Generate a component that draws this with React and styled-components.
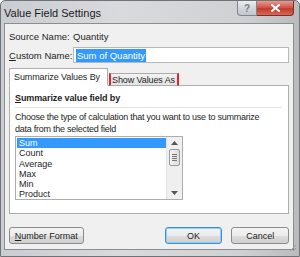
import React from 'react';
import styled, {createGlobalStyle} from 'styled-components';

const Global = createGlobalStyle`
    html, body { margin: 0; padding: 0; background: #ffffff; }
    body { font-family: "Liberation Sans", Arial, sans-serif; }
`

const Window = styled.div`
    width: 300px;
    height: 257px;
    box-sizing: border-box;
    display: flex;
    flex-direction: column;
    background: linear-gradient(90deg, #c9cdd1 0%, #d9dadc 40%, #cfd1d3 80%, #b9bbbd 100%);
    border: 1px solid #6f7378;
    border-radius: 5px 5px 0 0;
    overflow: hidden;
`

const TitleBar = styled.div`
    height: 22px;
    display: flex;
    align-items: flex-start;
    padding-left: 3px;
    flex-shrink: 0;
`

const Title = styled.div`
    font-size: 11px;
    color: #1b1b1b;
    margin-top: 6px;
    flex: 1;
`

const Controls = styled.div`
    display: flex;
    margin-right: 5px;
`

const CapButton = styled.div`
    height: 15px;
    width: ${p => p.$w}px;
    box-sizing: border-box;
    display: flex;
    align-items: center;
    justify-content: center;
    font-size: 10px;
    font-weight: bold;
    color: ${p => p.$close ? '#ffffff' : '#7a7f86'};
    background: ${p => p.$close
        ? 'linear-gradient(180deg, #e59b90 0%, #d2584b 45%, #c23a2b 55%, #d46a58 100%)'
        : 'linear-gradient(180deg, #eceef0 0%, #d3d6da 50%, #c3c7cc 100%)'};
    border: 1px solid ${p => p.$close ? '#7b2d26' : '#80858c'};
    border-top: none;
    border-radius: ${p => p.$close ? '0 0 4px 0' : '0 0 0 4px'};
    border-left-width: ${p => p.$close ? '0' : '1px'};
`

const Body = styled.div`
    flex: 1;
    margin: 0 5px 6px 3px;
    background: #f0f0f0;
    border: 1px solid #8a8d91;
    display: flex;
    flex-direction: column;
    padding: 0 4px 0 4px;
    font-size: 9px;
    letter-spacing: -0.1px;
    color: #1e1e1e;
    position: relative;
    white-space: nowrap;
`

const FieldRow = styled.div`
    display: flex;
    align-items: center;
    height: ${p => p.$h}px;
    margin-top: ${p => p.$mt || 0}px;
    font-size: 9.5px;
    letter-spacing: 0;
`

const Label = styled.div`
    width: 64px;
    u { text-decoration: underline; }
`

const TextInput = styled.div`
    flex: 1;
    height: 16px;
    box-sizing: border-box;
    background: #ffffff;
    border: 1px solid #b8b8b8;
    display: flex;
    align-items: center;
    padding-left: 2px;
    span {
        background: #3399ff;
        color: #ffffff;
        padding: 1px 1px;
    }
`

const Tabs = styled.div`
    display: flex;
    align-items: flex-end;
    margin-top: 5px;
    height: 18px;
    position: relative;
    z-index: 1;
`

const Tab = styled.div`
    height: ${p => p.$active ? 18 : 13}px;
    box-sizing: border-box;
    padding: 0 ${p => p.$marked ? 1 : 4}px;
    display: flex;
    align-items: center;
    background: ${p => p.$active ? '#ffffff' : 'linear-gradient(180deg, #f2f2f2, #e3e3e3)'};
    border: 1px solid #adadad;
    border-bottom: ${p => p.$active ? '1px solid #ffffff' : '1px solid #adadad'};
    ${p => p.$marked && 'border-left: 2px solid #e8202a; border-right: 2px solid #e8202a; margin-left: 1px;'}
    width: ${p => p.$w}px;
`

const Panel = styled.div`
    height: 129px;
    box-sizing: border-box;
    background: #ffffff;
    border: 1px solid #adadad;
    margin-top: -1px;
    padding: 7px 5px 0 5px;
    display: flex;
    flex-direction: column;
`

const Heading = styled.div`
    font-weight: bold;
    padding-bottom: 4px;
    border-bottom: 1px solid #e3e3e3;
    margin-right: 1px;
    u { text-decoration: underline; }
`

const Desc = styled.div`
    margin-top: 3px;
    line-height: 12px;
    letter-spacing: -0.25px;
`

const ListBox = styled.div`
    width: 168px;
    height: 64px;
    box-sizing: border-box;
    border: 1px solid #adadad;
    margin-top: 1px;
    display: flex;
    overflow: hidden;
    letter-spacing: 0;
`

const Items = styled.div`
    flex: 1;
    padding: 1px 0 0 1px;
`

const Item = styled.div`
    height: 10.3px;
    line-height: 10px;
    padding-left: 2px;
    background: ${p => p.$sel ? '#3399ff' : 'transparent'};
    color: ${p => p.$sel ? '#ffffff' : '#1e1e1e'};
`

const Scroll = styled.div`
    width: 15px;
    background: #efefef;
    border-left: 1px solid #e2e2e2;
    display: flex;
    flex-direction: column;
    align-items: center;
`

const Arrow = styled.div`
    height: 12px;
    display: flex;
    align-items: center;
    justify-content: center;
`

const Thumb = styled.div`
    width: 11px;
    height: 17px;
    box-sizing: border-box;
    border: 1px solid #9a9a9a;
    border-radius: 2px;
    background: linear-gradient(90deg, #f4f4f4, #dcdcdc);
    display: flex;
    flex-direction: column;
    align-items: center;
    justify-content: center;
    gap: 1px;
    i {
        display: block;
        width: 5px;
        height: 1px;
        background: #777;
    }
`

const ButtonRow = styled.div`
    display: flex;
    margin-top: 13px;
    height: 17px;
    letter-spacing: 0;
`

const Button = styled.div`
    width: ${p => p.$w}px;
    margin-left: ${p => p.$ml || 0}px;
    box-sizing: border-box;
    border: 1px solid ${p => p.$def ? '#3c8fd6' : '#8c8c8c'};
    box-shadow: ${p => p.$def ? 'inset 0 0 0 1px #8fd0f5' : 'none'};
    border-radius: 3px;
    background: linear-gradient(180deg, #f4f4f4 0%, #ebebeb 50%, #dddddd 51%, #cfcfcf 100%);
    display: flex;
    align-items: center;
    justify-content: center;
    u { text-decoration: underline; }
`

const Grip = styled.div`
    position: absolute;
    right: -4px;
    bottom: -5px;
`

const UpArrow = () => (
    <svg width="7" height="4" viewBox="0 0 7 4"><path d="M0 4 L3.5 0 L7 4 Z" fill="#555" /></svg>
)
const DownArrow = () => (
    <svg width="7" height="4" viewBox="0 0 7 4"><path d="M0 0 L3.5 4 L7 0 Z" fill="#555" /></svg>
)

const options = ['Sum', 'Count', 'Average', 'Max', 'Min', 'Product']

const App = () => {
    return (
        <>
            <Global />
            <Window>
                <TitleBar>
                    <Title>Value Field Settings</Title>
                    <Controls>
                        <CapButton $w={20}>?</CapButton>
                        <CapButton $w={37} $close>
                            <svg width="9" height="8" viewBox="0 0 9 8">
                                <path d="M1 1 L8 7 M8 1 L1 7" stroke="#ffffff" strokeWidth="2" strokeLinecap="square" />
                            </svg>
                        </CapButton>
                    </Controls>
                </TitleBar>
                <Body>
                    <FieldRow $h={14} $mt={5}>
                        <Label>Source Name:</Label>
                        <div>Quantity</div>
                    </FieldRow>
                    <FieldRow $h={16} $mt={4}>
                        <Label><u>C</u>ustom Name:</Label>
                        <TextInput><span>Sum of Quantity</span></TextInput>
                    </FieldRow>
                    <Tabs>
                        <Tab $active $w={99}>Summarize Values By</Tab>
                        <Tab $marked $w={70}>Show Values As</Tab>
                    </Tabs>
                    <Panel>
                        <Heading><u>S</u>ummarize value field by</Heading>
                        <Desc>
                            Choose the type of calculation that you want to use to summarize<br />
                            data from the selected field
                        </Desc>
                        <ListBox>
                            <Items>
                                {options.map((o, i) => <Item key={o} $sel={i === 0}>{o}</Item>)}
                            </Items>
                            <Scroll>
                                <Arrow><UpArrow /></Arrow>
                                <Thumb><i /><i /><i /><i /></Thumb>
                                <div style={{flex: 1}} />
                                <Arrow><DownArrow /></Arrow>
                            </Scroll>
                        </ListBox>
                    </Panel>
                    <ButtonRow>
                        <Button $w={75}><u>N</u>umber Format</Button>
                        <Button $w={58} $ml={81} $def>OK</Button>
                        <Button $w={58} $ml={9}>Cancel</Button>
                    </ButtonRow>
                    <Grip>
                        <svg width="9" height="9" viewBox="0 0 9 9">
                            <path d="M8 2 L2 8 M8 5 L5 8" stroke="#9a9a9a" strokeWidth="1" />
                        </svg>
                    </Grip>
                </Body>
            </Window>
        </>
    )
}

export default App
